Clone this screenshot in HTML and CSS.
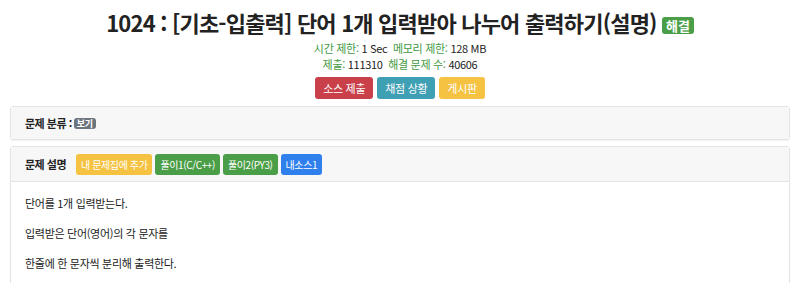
FILE: index.html
```html
<!DOCTYPE html>
<html lang="ko">
<head>
<meta charset="utf-8">
<link rel="stylesheet" href="styles.css">
</head>
<body>
<div class="page">
  <h1 class="title">1024 : [기초-입출력] 단어 1개 입력받아 나누어 출력하기(설명) <span class="badge badge-success">해결</span></h1>
  <div class="info">
    <div><span class="lbl">시간 제한:</span> 1 Sec &nbsp;<span class="lbl">메모리 제한:</span> 128 MB</div>
    <div><span class="lbl">제출:</span> 111310 &nbsp;<span class="lbl">해결 문제 수:</span> 40606</div>
  </div>
  <div class="actions">
    <span class="btn btn-red">소스 제출</span>
    <span class="btn btn-teal">채점 상황</span>
    <span class="btn btn-yellow">게시판</span>
  </div>
  <div class="panel">
    <div class="panel-head"><b class="hlabel">문제 분류 :</b><span class="badge badge-gray">보기</span></div>
  </div>
  <div class="panel">
    <div class="panel-head head2">
      <b class="hlabel h2label">문제 설명</b>
      <span class="sbtn btn-yellow">내 문제집에 추가</span>
      <span class="sbtn btn-green">풀이1(C/C++)</span>
      <span class="sbtn btn-green">풀이2(PY3)</span>
      <span class="sbtn btn-blue">내소스1</span>
    </div>
    <div class="panel-body">
      <p>단어를 1개 입력받는다.</p>
      <p>입력받은 단어(영어)의 각 문자를</p>
      <p>한줄에 한 문자씩 분리해 출력한다.</p>
    </div>
  </div>
</div>
</body>
</html>
```
FILE: styles.css
```css
* { box-sizing: border-box; }
html, body { margin: 0; padding: 0; background: #fff; }
body {
  font-family: "Noto Sans CJK KR", "Noto Sans", sans-serif;
  color: #222;
  font-size: 11px;
  letter-spacing: -0.3px;
}
.page { padding: 0 10px; }
.title {
  margin: 0;
  padding-top: 6px;
  text-align: center;
  font-size: 22px;
  letter-spacing: -0.8px;
  line-height: 32px;
  font-weight: 700;
  color: #222;
}
.badge {
  display: inline-block;
  color: #fff;
  font-weight: 700;
  border-radius: 3px;
  vertical-align: middle;
  letter-spacing: 0;
}
.badge-success {
  background: #4a9e47;
  font-size: 13px;
  line-height: 17px;
  padding: 0 4px;
  position: relative;
  top: -1px;
}
.badge-gray {
  background: #6c757d;
  font-size: 9px;
  line-height: 11px;
  padding: 0 3px;
  border-radius: 3px;
  letter-spacing: -0.3px;
}
.info {
  text-align: center;
  font-size: 11px;
  line-height: 16px;
  margin-top: 2px;
}
.lbl { color: #3f9a3f; }
.actions {
  display: flex;
  justify-content: center;
  gap: 4px;
  margin-top: 5px;
}
.btn {
  display: inline-block;
  color: #fff;
  font-size: 11px;
  line-height: 22px;
  padding: 0 8px;
  border-radius: 3px;
}
.btn-red { background: #c9404a; }
.btn-teal { background: #3f9fb3; }
.btn-yellow { background: #f5c241; color: #fff; }
.btn-green { background: #4a9e47; color: #fff; }
.btn-blue { background: #2f80ec; color: #fff; }
.panel {
  border: 1px solid #e3e3e3;
  border-radius: 3px;
  box-shadow: 0 1px 1px rgba(0,0,0,0.05);
  background: #fff;
}
.panel + .panel { margin-top: 6px; }
.actions + .panel { margin-top: 7px; }
.panel-head {
  background: #f7f7f7;
  padding: 0 14px;
  height: 32px;
  display: flex;
  align-items: center;
  gap: 2px;
}
.hlabel { letter-spacing: -0.5px; }
.head2 {
  height: 35px;
  border-bottom: 1px solid #e3e3e3;
  gap: 3px;
}
.h2label { margin-right: 7px; }
.sbtn {
  display: inline-block;
  font-size: 10px;
  line-height: 21px;
  padding: 0 5px;
  border-radius: 3px;
  letter-spacing: -0.4px;
}
.panel-body {
  padding: 1px 14px 20px;
}
.panel-body p { margin: 10px 0 0; line-height: 20px; }
.panel-body p + p { margin-top: 10px; }
```
